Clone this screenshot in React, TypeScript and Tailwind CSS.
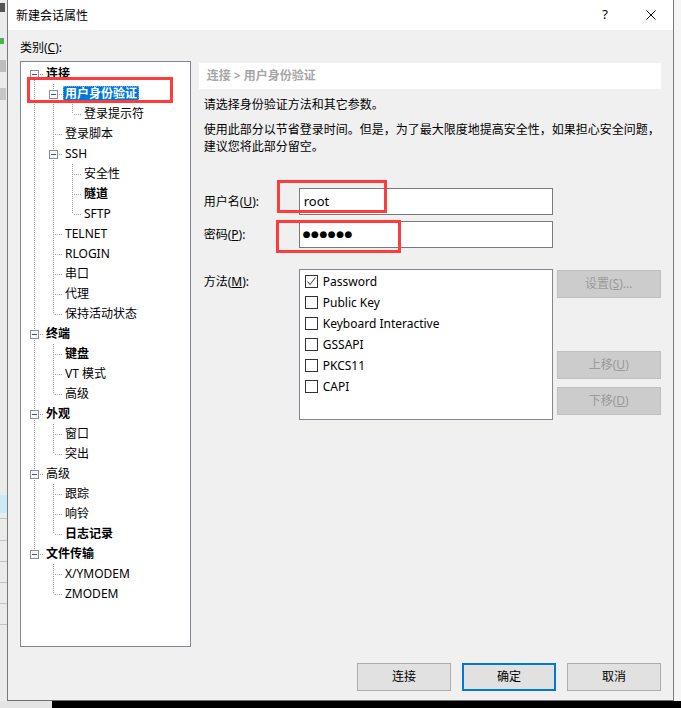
import React from "react";

type TreeNode = {
  label: string;
  bold?: boolean;
  selected?: boolean;
  children?: TreeNode[];
};

type Row = {
  node: TreeNode;
  guides: boolean[];
  first: boolean;
  last: boolean;
};

const tree: TreeNode[] = [
  {
    label: "连接",
    bold: true,
    children: [
      { label: "用户身份验证", bold: true, selected: true, children: [{ label: "登录提示符" }] },
      { label: "登录脚本" },
      {
        label: "SSH",
        children: [{ label: "安全性" }, { label: "隧道", bold: true }, { label: "SFTP" }],
      },
      { label: "TELNET" },
      { label: "RLOGIN" },
      { label: "串口" },
      { label: "代理" },
      { label: "保持活动状态" },
    ],
  },
  {
    label: "终端",
    bold: true,
    children: [{ label: "键盘", bold: true }, { label: "VT 模式" }, { label: "高级" }],
  },
  {
    label: "外观",
    bold: true,
    children: [{ label: "窗口" }, { label: "突出" }],
  },
  {
    label: "高级",
    children: [{ label: "跟踪" }, { label: "响铃" }, { label: "日志记录", bold: true }],
  },
  {
    label: "文件传输",
    bold: true,
    children: [{ label: "X/YMODEM" }, { label: "ZMODEM" }],
  },
];

const methods = [
  { label: "Password", checked: true },
  { label: "Public Key" },
  { label: "Keyboard Interactive" },
  { label: "GSSAPI" },
  { label: "PKCS11" },
  { label: "CAPI" },
];

function flatten(nodes: TreeNode[], depth = 0, guides: boolean[] = []): Row[] {
  const rows: Row[] = [];
  nodes.forEach((node, i) => {
    const last = i === nodes.length - 1;
    rows.push({ node, guides, first: depth === 0 && i === 0, last });
    if (node.children) rows.push(...flatten(node.children, depth + 1, [...guides, !last]));
  });
  return rows;
}

const DOT = "#a0a0a0";

// one 19x20 indent cell of the tree lines
function LineCell({
  up,
  down,
  across,
  box,
}: {
  up?: boolean;
  down?: boolean;
  across?: boolean;
  box?: boolean;
}) {
  return (
    <svg width="19" height="20" className="shrink-0" shapeRendering="crispEdges">
      {up && <line x1="9.5" y1="0" x2="9.5" y2="10" stroke={DOT} strokeDasharray="1 1" />}
      {down && <line x1="9.5" y1="10" x2="9.5" y2="20" stroke={DOT} strokeDasharray="1 1" />}
      {across && (
        <line x1={box ? 15 : 11} y1="10.5" x2="19" y2="10.5" stroke={DOT} strokeDasharray="1 1" />
      )}
      {box && (
        <>
          <rect x="5.5" y="6.5" width="8" height="8" fill="#f7f7f7" stroke="#8e8f8f" />
          <line x1="7" y1="10.5" x2="12" y2="10.5" stroke="#3a5594" />
        </>
      )}
    </svg>
  );
}

function TreeRow({ row }: { row: Row }) {
  const { node, guides, first, last } = row;
  return (
    <div className="flex h-[20px] items-center">
      {guides.map((g, i) => (
        <LineCell key={i} up={g} down={g} />
      ))}
      <LineCell up={!first} down={!last} across box={!!node.children} />
      <span
        className={
          "h-[16px] whitespace-nowrap px-[2px] text-[12px] leading-[16px] " +
          (node.bold ? "font-bold " : "") +
          (node.selected
            ? "bg-[#0078d7] text-white outline-1 outline-dotted outline-[#7fb5e6] -outline-offset-1"
            : "text-black")
        }
      >
        {node.label}
      </span>
    </div>
  );
}

function Checkbox({ checked }: { checked?: boolean }) {
  return (
    <span className="flex h-[13px] w-[13px] shrink-0 items-center justify-center border border-[#333] bg-white">
      {checked && (
        <svg width="11" height="11" viewBox="0 0 11 11">
          <polyline points="1.5,5.5 4,8.5 9.5,1.5" fill="none" stroke="#555" strokeWidth="1.1" />
        </svg>
      )}
    </span>
  );
}

function DisabledButton({ children, className = "" }: { children: React.ReactNode; className?: string }) {
  return (
    <div
      className={
        "flex h-[28px] w-[104px] items-center justify-center border border-[#bfbfbf] bg-[#cccccc] text-[12px] text-[#9a9a9a] " +
        className
      }
    >
      {children}
    </div>
  );
}

function DialogButton({ children, primary }: { children: React.ReactNode; primary?: boolean }) {
  return (
    <div
      className={
        "flex h-[28px] w-[94px] items-center justify-center bg-[#e1e1e1] text-[12px] text-black " +
        (primary ? "border-2 border-[#0078d7]" : "border border-[#adadad]")
      }
    >
      {children}
    </div>
  );
}

export default function App() {
  const rows = flatten(tree);

  return (
    <div className="relative flex h-[708px] w-[681px] flex-col overflow-hidden bg-black font-['Noto_Sans','Noto_Sans_CJK_SC',sans-serif] text-black">
      <div className="flex h-[701px]">
        {/* window behind, cut off on the left */}
        <div className="flex w-[7px] flex-col bg-[#ebebeb]">
          <div className="mt-[3px] h-[9px] w-[5px] bg-[#555]" />
          <div className="mt-[26px] h-[6px] w-[4px] bg-[#4caf50]" />
          <div className="mt-[16px] h-[12px] w-[6px] bg-[#bdbdbd]" />
          <div className="mt-[16px] h-[12px] w-[6px] bg-[#c6c6c6]" />
          <div className="mt-[395px] h-[18px] bg-[#cde8f7]" />
          <div className="mt-[5px] h-px bg-[#c2c2c2]" />
          <div className="mt-[21px] h-px bg-[#c2c2c2]" />
          <div className="mt-[20px] h-px bg-[#c2c2c2]" />
          <div className="mt-[20px] h-px bg-[#c2c2c2]" />
          <div className="mt-[20px] h-px bg-[#c2c2c2]" />
          <div className="mt-[20px] h-px bg-[#c2c2c2]" />
        </div>

        {/* dialog */}
        <div className="flex w-[667px] flex-col border-x border-b border-x-[#7a7a7a] border-b-[#6f6f6f] bg-[#f0f0f0]">
          <div className="flex h-[30px] items-center bg-white">
            <span className="pl-[8px] pt-[1px] text-[12px]">新建会话属性</span>
            <div className="ml-auto flex h-full">
              <div className="flex w-[46px] items-center justify-center text-[13px]">?</div>
              <div className="flex w-[45px] items-center justify-center">
                <svg width="10" height="10" viewBox="0 0 10 10">
                  <path d="M0.5 0.5 L9.5 9.5 M9.5 0.5 L0.5 9.5" stroke="#000" strokeWidth="1" />
                </svg>
              </div>
            </div>
          </div>

          <div className="flex flex-col px-[12px]">
            <div className="flex items-start">
              <div className="flex w-[171px] flex-col pt-[10px]">
                <span className="h-[16px] text-[12px] leading-[16px]">
                  类别(<u>C</u>):
                </span>
                <div className="mt-[5px] h-[586px] border border-[#828790] bg-white pl-[4px] pt-[2px]">
                  {rows.map((r, i) => (
                    <TreeRow key={i} row={r} />
                  ))}
                </div>
              </div>

              <div className="ml-[8px] flex w-[463px] flex-col pt-[33px] text-[12px]">
                <div className="flex h-[26px] items-center bg-white pl-[8px] font-bold text-[#a6a6a6]">
                  连接 &gt; 用户身份验证
                </div>
                <p className="mt-[7px] pl-[5px] leading-[17px]">请选择身份验证方法和其它参数。</p>
                <p className="mt-[8px] whitespace-nowrap pl-[5px] leading-[17px]">
                  使用此部分以节省登录时间。但是，为了最大限度地提高安全性，如果担心安全问题，
                  <br />
                  建议您将此部分留空。
                </p>

                <div className="mt-[33px] flex h-[27px] items-center">
                  <span className="w-[100px] pl-[5px]">
                    用户名(<u>U</u>):
                  </span>
                  <div className="flex h-[27px] w-[254px] items-center border border-[#7a7a7a] bg-white pl-[4px] text-[13px]">
                    root
                  </div>
                </div>
                <div className="mt-[6px] flex h-[27px] items-center">
                  <span className="w-[100px] pl-[5px]">
                    密码(<u>P</u>):
                  </span>
                  <div className="flex h-[27px] w-[254px] items-center border border-[#7a7a7a] bg-white pl-[3px] font-['DejaVu_Sans',sans-serif] text-[9px] tracking-[0.5px]">
                    ●●●●●●
                  </div>
                </div>

                <div className="mt-[21px] flex items-start">
                  <span className="w-[100px] pl-[5px] pt-[4px] leading-[17px]">
                    方法(<u>M</u>):
                  </span>
                  <div className="h-[151px] w-[254px] border border-[#828790] bg-white pt-[1px]">
                    {methods.map((m) => (
                      <div key={m.label} className="flex h-[21px] items-center pl-[5px]">
                        <Checkbox checked={m.checked} />
                        <span className="ml-[5px] text-[12px]">{m.label}</span>
                      </div>
                    ))}
                  </div>
                  <div className="ml-[4px] flex flex-col">
                    <DisabledButton className="mt-[1px]">
                      设置(<u>S</u>)...
                    </DisabledButton>
                    <DisabledButton className="mt-[53px]">
                      上移(<u>U</u>)
                    </DisabledButton>
                    <DisabledButton className="mt-[8px]">
                      下移(<u>D</u>)
                    </DisabledButton>
                  </div>
                </div>
              </div>
            </div>

            <div className="mt-[16px] flex justify-end gap-[11px]">
              <DialogButton>连接</DialogButton>
              <DialogButton primary>确定</DialogButton>
              <DialogButton>取消</DialogButton>
            </div>
          </div>
        </div>

        <div className="w-[7px] bg-[#f5f5f5]" />
      </div>

      <div className="flex h-[7px]">
        <div className="w-[52px] bg-[#e4e4e4]" />
        <div className="flex-1 bg-black" />
      </div>

      {/* red annotation boxes */}
      <div className="absolute left-[27px] top-[77px] h-[26px] w-[146px] border-[3px] border-[#ff3c3c]" />
      <div className="absolute left-[277px] top-[180px] h-[33px] w-[110px] border-[3px] border-[#ff3c3c]" />
      <div className="absolute left-[276px] top-[220px] h-[33px] w-[125px] border-[3px] border-[#ff3c3c]" />
    </div>
  );
}
